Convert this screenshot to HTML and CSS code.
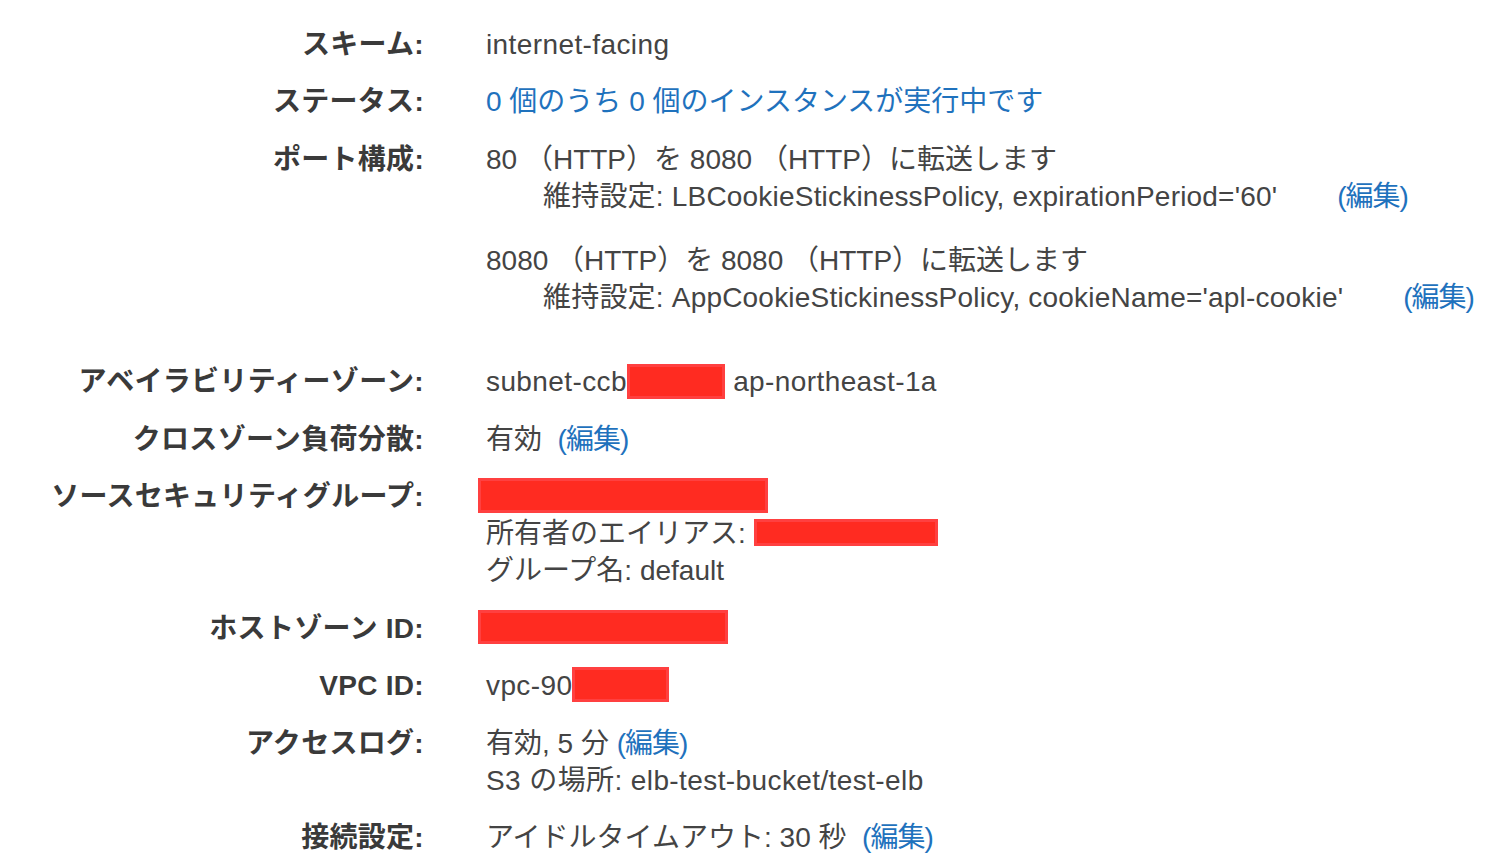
FILE: index.html
```html
<!DOCTYPE html>
<html lang="ja">
<head>
  <meta charset="UTF-8">
  <meta name="viewport" content="width=device-width, initial-scale=1.0">
  <title>ロードバランサーの詳細</title>
  <link rel="stylesheet" href="styles.css">
</head>
<body>

  <div class="details">
    <div class="row">
      <div class="label">スキーム:</div>
      <div class="value">
        <div class="line latin">internet-facing</div>
      </div>
    </div>

    <div class="row">
      <div class="label">ステータス:</div>
      <div class="value">
        <div class="line"><a class="status" href="#">0 個のうち 0 個のインスタンスが実行中です</a></div>
      </div>
    </div>

    <div class="row">
      <div class="label">ポート構成:</div>
      <div class="value">
        <div class="port">
          <div class="line">80 （HTTP）を 8080 （HTTP）に転送します</div>
          <div class="line sub">維持設定: LBCookieStickinessPolicy, expirationPeriod='60' <a class="edit wide" href="#">(編集)</a></div>
        </div>
        <div class="port">
          <div class="line">8080 （HTTP）を 8080 （HTTP）に転送します</div>
          <div class="line sub">維持設定: AppCookieStickinessPolicy, cookieName='apl-cookie' <a class="edit wide" href="#">(編集)</a></div>
        </div>
      </div>
    </div>

    <div class="row">
      <div class="label">アベイラビリティーゾーン:</div>
      <div class="value">
        <div class="line latin">subnet-ccb<span class="redact redact-subnet"></span> ap-northeast-1a</div>
      </div>
    </div>

    <div class="row">
      <div class="label">クロスゾーン負荷分散:</div>
      <div class="value">
        <div class="line">有効 &nbsp;<a class="edit" href="#">(編集)</a></div>
      </div>
    </div>

    <div class="row">
      <div class="label">ソースセキュリティグループ:</div>
      <div class="value">
        <div class="line"><span class="redact redact-group"></span></div>
        <div class="line">所有者のエイリアス: <span class="redact redact-alias"></span></div>
        <div class="line">グループ名: default</div>
      </div>
    </div>

    <div class="row">
      <div class="label">ホストゾーン ID:</div>
      <div class="value">
        <div class="line"><span class="redact redact-zone"></span></div>
      </div>
    </div>

    <div class="row">
      <div class="label">VPC ID:</div>
      <div class="value">
        <div class="line latin">vpc-90<span class="redact redact-vpc"></span></div>
      </div>
    </div>

    <div class="row">
      <div class="label">アクセスログ:</div>
      <div class="value">
        <div class="line">有効, 5 分 <a class="edit" href="#">(編集)</a></div>
        <div class="line latin">S3 の場所: elb-test-bucket/test-elb</div>
      </div>
    </div>

    <div class="row">
      <div class="label">接続設定:</div>
      <div class="value">
        <div class="line">アイドルタイムアウト: 30 秒 &nbsp;<a class="edit" href="#">(編集)</a></div>
      </div>
    </div>
  </div>

</body>
</html>
```

FILE: styles.css
```css
body {
  margin: 8px;
  font-family: "Liberation Sans", Arial, "Noto Sans CJK JP", sans-serif;
  font-size: 28px;
  line-height: 37px;
  color: #444;
  background: #fff;
}
.details {
  padding-top: 7.5px;
}
.row {
  display: flex;
  align-items: flex-start;
  padding: 10px 0 10.5px 0;
}
.label {
  width: 416px;
  height: 37px;
  flex-shrink: 0;
  text-align: right;
  font-weight: bold;
  color: #3a3a3a;
  letter-spacing: 0.3px;
}
.value {
  margin-left: 62px;
  white-space: nowrap;
}
.line {
  height: 37px;
}
.latin {
  letter-spacing: 0.4px;
}
.port {
  margin-bottom: 27px;
}
.sub {
  padding-left: 57px;
  letter-spacing: 0.2px;
}
a {
  color: #1f72bd;
  text-decoration: none;
}
.edit {
  letter-spacing: -1px;
}
.edit.wide {
  margin-left: 52px;
}
.redact {
  display: inline-block;
  box-sizing: border-box;
  height: 35px;
  vertical-align: top;
  background-color: #ff2b21;
  border: 3px solid #ff4040;
}
.redact-subnet {
  width: 98px;
  margin-top: 1px;
}
.redact-group {
  width: 290px;
  margin-left: -8px;
}
.redact-alias {
  width: 184px;
  height: 27px;
  margin-top: 4px;
}
.redact-zone {
  width: 250px;
  height: 34px;
  margin-left: -8px;
}
.redact-vpc {
  width: 97px;
}
```
